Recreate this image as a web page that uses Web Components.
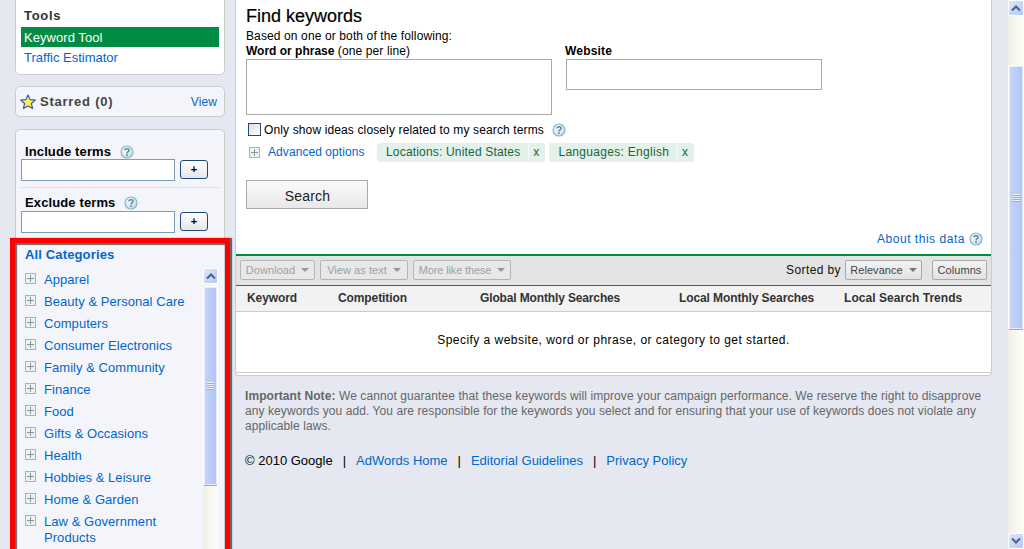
<!DOCTYPE html>
<html><head><meta charset="utf-8">
<style>
html,body{margin:0;height:549px;overflow:hidden;background:#e5e8f1;font:13px "Liberation Sans",Arial,sans-serif;color:#000}
</style></head><body>
<template id="t-app"><style>
:host{display:grid;grid-template-columns:235px 773px 16px;height:549px;overflow:hidden;position:relative}
.red{position:absolute;left:10px;top:238px;width:210px;height:330px;border:5px solid #f00;box-shadow:inset 2px 2px 1px #666,2px 0 1px #666;pointer-events:none}
</style><slot name="side"></slot><slot name="main"></slot><slot name="bar"></slot><div class="red"></div></template>

<template id="t-box"><style>
:host{display:block;background:var(--bg,#f3f5fa);border:1px solid #ccc;border-radius:5px;margin:0 10px 11px 15px;box-sizing:border-box}
</style><slot></slot></template>

<template id="t-help"><style>:host{display:inline-block;width:14px;height:14px;vertical-align:-3px}svg{display:block}</style>
<svg width="14" height="14" viewBox="0 0 14 14"><defs><radialGradient id="g" cx=".4" cy=".35" r=".7"><stop offset="0" stop-color="#fff"/><stop offset="1" stop-color="#bcd8e2"/></radialGradient></defs><circle cx="7" cy="7" r="6" fill="url(#g)" stroke="#8fb7c6" stroke-width="1.2"/><path d="M5 5.4C5 4.2 6 3.7 7 3.7 8.2 3.7 9 4.4 9 5.4 9 6.7 7 6.7 7 8.4" fill="none" stroke="#4f8aa8" stroke-width="1.4"/><rect x="6.2" y="9.3" width="1.6" height="1.6" fill="#4f8aa8"/></svg></template>

<template id="t-plus"><style>:host{display:inline-block;width:11px;height:11px}svg{display:block}</style>
<svg width="11" height="11" viewBox="0 0 11 11"><rect x=".5" y=".5" width="10" height="10" fill="#eef2f5" stroke="#9fb4bc"/><path d="M2 5.5h7M5.5 2v7" stroke="#7f989f" fill="none"/></svg></template>

<template id="t-star"><style>:host{display:inline-block;width:16px;height:16px}svg{display:block}</style>
<svg width="16" height="16" viewBox="0 0 16 16"><path d="M8 .9l2.1 4.7 5.2.5-3.9 3.4 1.2 5.1L8 12l-4.6 2.6 1.2-5.1L.7 6.1l5.2-.5z" fill="#fbee4f" stroke="#2f55a8" stroke-width="1.1" stroke-linejoin="round"/></svg></template>

<template id="t-sbtn"><style>:host{display:block;height:16px;box-sizing:border-box;border:1px solid #fff;border-radius:2px;background:linear-gradient(135deg,#dfe7fd,#b4c7f5)}svg{display:block;margin:3px auto 0}</style>
<svg width="10" height="8" viewBox="0 0 10 8"><path id="p" fill="none" stroke="#4d6185" stroke-width="2"/></svg></template>

<template id="t-sbar"><style>
:host{display:flex;flex-direction:column;width:var(--w,16px);height:100%;background:linear-gradient(90deg,#f0eee6,#f8f7f1 50%,#fdfdf9);overflow:hidden}
.gap{flex:none}
.thumb{flex:none;box-sizing:border-box;border:1px solid #fff;border-bottom-color:#8fa9e6;border-radius:2px;background:linear-gradient(90deg,#c5d4fa,#b9cbf7 60%,#aec3f2);display:flex;align-items:center;justify-content:center;box-shadow:0 0 0 1px #e4ebfb inset}
.grip{width:7px;height:8px;background:repeating-linear-gradient(180deg,#eef3fe 0 1px,#8fa9e6 1px 2px)}
.fill{flex:1}
</style><scroll-btn dir="up"></scroll-btn><div class="gap" id="a"></div><div class="thumb" id="th"><div class="grip"></div></div><div class="fill"></div><scroll-btn dir="down" id="dn"></scroll-btn></template>

<template id="t-side"><style>:host{display:block;overflow:hidden;height:549px}</style><slot></slot></template>

<template id="t-tools"><style>
:host{display:block;padding:8px 5px 0;height:74px;margin-top:0;box-sizing:border-box}
h3{margin:0 0 4px 3px;font-size:13px;line-height:15px;color:#333;letter-spacing:.7px}
.s{background:#008c44;color:#fff;line-height:21px;height:20px;padding-left:3px;letter-spacing:.05px}
a{display:block;color:#0066cc;line-height:21px;padding-left:3px;letter-spacing:0}
</style><h3>Tools</h3><div class="s">Keyword Tool</div><a>Traffic Estimator</a></template>

<template id="t-starred"><style>
:host{display:flex;align-items:center;height:29px;padding:0 7px 0 4px}
b{color:#444;margin-left:4px;letter-spacing:.75px;flex:1}
a{color:#0066cc;font-size:12px;letter-spacing:.1px}
</style><star-icon></star-icon><b>Starred (0)</b><a>View</a></template>

<template id="t-terms"><style>
:host{display:block;padding:14px 5px 0 5px}
.l{font-weight:bold;line-height:15px;padding-left:4px;letter-spacing:.12px;height:15px}
.l+.r~.l{margin-bottom:1px}
help-icon{margin-left:9px}
.r{display:flex;align-items:flex-start;margin-top:0}
.i{width:154px;height:22px;box-sizing:border-box;border:1px solid #7f9db9;background:#fff;flex:none}
.b{margin-left:5px;margin-top:1px;width:28px;height:19px;box-sizing:border-box;border:1px solid #1c4a80;border-radius:3px;background:linear-gradient(#fff,#e6e6e6);font:bold 11px/16px "Liberation Sans",sans-serif;text-align:center}
hr{border:0;border-top:1px solid #ddd;margin:6px 0 7px}
</style><div class="l">Include terms<help-icon></help-icon></div><div class="r"><div class="i"></div><div class="b">+</div></div><hr>
<div class="l">Exclude terms<help-icon></help-icon></div><div class="r"><div class="i"></div><div class="b">+</div></div></template>

<template id="t-cats"><style>
:host{display:block;padding:0 0 0 9px;margin-top:14px}
h4{margin:0;color:#0066cc;font-size:13px;line-height:16px;padding-top:0;letter-spacing:.14px}
.w{display:flex;margin-top:5px;height:300px}
.l{flex:none;width:178px;padding-top:4px;box-sizing:border-box}
</style><h4>All Categories</h4><div class="w"><div class="l"><slot></slot></div><scroll-bar before="2" thumb="200" style="--w:15px"></scroll-bar></div></template>

<template id="t-cat"><style>
:host{display:grid;grid-template-columns:19px 1fr;margin-bottom:6px;line-height:16px;color:#0066cc;letter-spacing:.05px}
plus-icon{margin-top:1px}
</style><plus-icon></plus-icon><div><slot></slot></div></template>

<template id="t-main"><style>:host{display:block;height:549px;overflow:hidden}</style><slot></slot></template>

<template id="t-panel"><style>
:host{display:block;background:#fff;border-left:1px solid #ccc;border-right:1px solid #ccc;border-bottom:1px solid #ccc;border-radius:0 0 4px 4px;width:757px;box-sizing:border-box;padding-bottom:2px}
</style><slot></slot></template>

<template id="t-find"><style>
:host{display:block;padding:6px 0 0 10px;height:254px;box-sizing:border-box}
h1{margin:0;font-size:18px;font-weight:normal;line-height:21px;-webkit-text-stroke:.2px #000;letter-spacing:0}
.sub{font-size:12px;line-height:14px;margin-top:2px;letter-spacing:.12px}
.cols{display:flex;margin-top:1px}
.lb{font-size:12px;line-height:14px;height:15px}
.lb span{letter-spacing:.12px}
.lb b{letter-spacing:0}
.ta{width:306px;height:56px;box-sizing:border-box;border:1px solid #aaa;background:#fff}
.in{width:256px;height:31px;box-sizing:border-box;border:1px solid #aaa;margin-left:1px}
.c2{margin-left:13px}
.c2 b{letter-spacing:.2px}
.chk{display:flex;align-items:center;margin:7px 0 0 2px;height:15px;font-size:12px;letter-spacing:.13px}
.box{width:13px;height:13px;box-sizing:border-box;border:1px solid #1c4a80;background:linear-gradient(135deg,#ddd,#fff);margin-right:3px}
.chk help-icon{margin-left:8px}
.adv{display:flex;align-items:center;margin:6px 0 0 3px;height:19px}
.adv a{color:#0066cc;font-size:12px;margin:-2px 0 0 8px;letter-spacing:.07px;width:109px}
.cc{display:flex;height:19px;background:#e4f1ea;border-radius:2px;color:#14663c;font-size:12px;line-height:19px;letter-spacing:.18px;margin-right:4px}
.cc i{font-style:normal;padding:0 8px 0 9px;white-space:nowrap}
.cc u{text-decoration:none;border-left:1px solid #f4f9f6;width:14px;padding-right:2px;text-align:center}
.cc+.cc{letter-spacing:.3px}
.btn{margin-top:18px;width:122px;height:29px;box-sizing:border-box;border:1px solid #aaa;background:linear-gradient(#fafafa,#e8e8e8);text-align:center;line-height:30px;font-size:14px;letter-spacing:.2px;color:#222;padding-left:1px}
.ab{display:flex;justify-content:flex-end;align-items:center;gap:4px;margin:22px 8px 0 0;height:16px}
.ab a{color:#0066cc;font-size:12px;letter-spacing:.53px}
</style><h1>Find keywords</h1><div class="sub">Based on one or both of the following:</div>
<div class="cols"><div><div class="lb"><b>Word or phrase</b> <span>(one per line)</span></div><div class="ta"></div></div>
<div class="c2"><div class="lb"><b>Website</b></div><div class="in"></div></div></div>
<div class="chk"><div class="box"></div>Only show ideas closely related to my search terms<help-icon></help-icon></div>
<div class="adv"><plus-icon></plus-icon><a>Advanced options</a><div class="cc"><i>Locations: United States</i><u>x</u></div><div class="cc"><i>Languages: English</i><u>x</u></div></div>
<div class="btn">Search</div>
<div class="ab"><a>About this data</a><help-icon></help-icon></div></template>

<template id="t-tbar"><style>
:host{display:flex;align-items:center;height:32px;box-sizing:border-box;background:#e3e3e3;border-top:2px solid #008c44;border-bottom:1px solid #008c44;padding:0 4px 1px 4px;font-size:12px}
</style><slot></slot></template>

<template id="t-tbtn"><style>
:host{display:flex;align-items:center;justify-content:center;height:20px;box-sizing:border-box;border:1px solid #b5b5b5;border-radius:2px;margin-right:5px;font-size:11px;line-height:16px;color:#a0a0a0;letter-spacing:.05px;gap:6px;background:#e8e8e8;padding-bottom:1px}
:host([on]){color:#444;background:linear-gradient(#f2f2f2,#e2e2e2);border-color:#aaa}
i{width:0;height:0;border:4px solid transparent;border-top:4px solid #999;border-bottom:0}
:host([on]) i{border-top-color:#777}
:host([plain]) i{display:none}
</style><slot></slot><i></i></template>

<template id="t-thead"><style>
:host{display:flex;height:26px;box-sizing:border-box;background:#f2f2f2;border-bottom:1px solid #ccc;font-size:12px;font-weight:bold;color:#333;line-height:25px;letter-spacing:-.1px}
span{white-space:nowrap}
</style><span style="margin-left:11px;width:91px">Keyword</span><span style="width:142px">Competition</span><span style="width:199px;letter-spacing:-.14px">Global Monthly Searches</span><span style="width:165px">Local Monthly Searches</span><span style="letter-spacing:.05px">Local Search Trends</span></template>

<template id="t-empty"><style>:host{display:block;height:61px;box-sizing:border-box;border-bottom:1px solid #ccc;text-align:center;line-height:57px;font-size:12px;letter-spacing:.47px}</style>Specify a website, word or phrase, or category to get started.</template>

<template id="t-foot"><style>
:host{display:block;padding:13px 0 0 10px;width:760px;box-sizing:border-box}
p{margin:0;font-size:12px;line-height:15px;color:#666;letter-spacing:.08px}
div{margin-top:19px;font-size:13px;line-height:16px;letter-spacing:0}
a{color:#0066cc}
s{text-decoration:none;margin:0 10px}
</style><p><b>Important Note:</b> We cannot guarantee that these keywords will improve your campaign performance. We reserve the right to disapprove any keywords you add. You are responsible for the keywords you select and for ensuring that your use of keywords does not violate any applicable laws.</p>
<div>© 2010 Google<s>|</s><a>AdWords Home</a><s>|</s><a>Editorial Guidelines</a><s>|</s><a>Privacy Policy</a></div></template>

<app-root>
 <side-col slot="side">
  <side-box style="--bg:#fff;border-top:0;border-radius:0 0 5px 5px"><tools-list></tools-list></side-box>
  <side-box style="margin-bottom:12px"><starred-row></starred-row></side-box>
  <side-box style="height:440px;margin-bottom:0"><terms-form></terms-form>
   <cat-tree>
    <cat-item>Apparel</cat-item><cat-item>Beauty &amp; Personal Care</cat-item><cat-item>Computers</cat-item><cat-item>Consumer Electronics</cat-item><cat-item>Family &amp; Community</cat-item><cat-item>Finance</cat-item><cat-item>Food</cat-item><cat-item>Gifts &amp; Occasions</cat-item><cat-item>Health</cat-item><cat-item>Hobbies &amp; Leisure</cat-item><cat-item>Home &amp; Garden</cat-item><cat-item>Law &amp; Government Products</cat-item>
   </cat-tree>
  </side-box>
 </side-col>
 <main-col slot="main">
  <main-panel><find-form></find-form><tool-bar>
    <tool-btn style="width:75px">Download</tool-btn><tool-btn style="width:88px">View as text</tool-btn><tool-btn style="width:98px;letter-spacing:-.15px">More like these</tool-btn>
    <bar-space style="flex:1"></bar-space><bar-label>Sorted by</bar-label><tool-btn on style="width:77px;margin-right:10px">Relevance</tool-btn><tool-btn on plain style="width:55px;margin-right:0">Columns</tool-btn>
  </tool-bar><table-head></table-head><empty-row></empty-row></main-panel>
  <foot-note></foot-note>
 </main-col>
 <scroll-bar slot="bar" before="49" thumb="265"></scroll-bar>
</app-root>

<script>
function def(name,id,init){customElements.define(name,class extends HTMLElement{
  constructor(){super();this.attachShadow({mode:'open'}).appendChild(document.getElementById(id).content.cloneNode(true));}
  connectedCallback(){if(init)init.call(this,this.shadowRoot);}
});}
def('app-root','t-app');
def('side-col','t-side');
def('side-box','t-box');
def('help-icon','t-help');
def('plus-icon','t-plus');
def('star-icon','t-star');
def('scroll-btn','t-sbtn',function(r){r.getElementById('p').setAttribute('d',this.getAttribute('dir')=='up'?'M1 6.5l4-4 4 4':'M1 1.5l4 4 4-4');});
def('scroll-bar','t-sbar',function(r){r.getElementById('a').style.height=this.getAttribute('before')+'px';r.getElementById('th').style.height=this.getAttribute('thumb')+'px';});
def('tools-list','t-tools');
def('starred-row','t-starred');
def('terms-form','t-terms');
def('cat-tree','t-cats');
def('cat-item','t-cat');
def('main-col','t-main');
def('main-panel','t-panel');
def('find-form','t-find');
def('tool-bar','t-tbar');
def('tool-btn','t-tbtn');
customElements.define('bar-space',class extends HTMLElement{constructor(){super();this.attachShadow({mode:'open'}).innerHTML='<style>:host{display:block}</style>';}});
customElements.define('bar-label',class extends HTMLElement{constructor(){super();this.attachShadow({mode:'open'}).innerHTML='<style>:host{display:block;margin-right:4px;font-size:12px;letter-spacing:.4px;color:#111}</style><slot></slot>';}});
def('table-head','t-thead');
def('empty-row','t-empty');
def('foot-note','t-foot');
</script>
</body></html>
